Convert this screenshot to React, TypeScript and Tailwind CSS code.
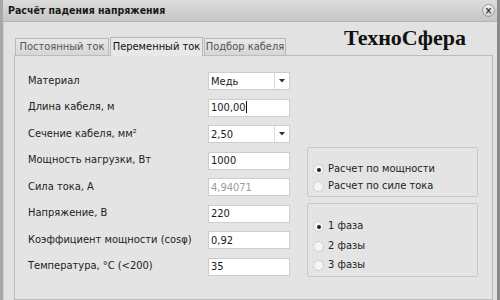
import React from "react";

const rows: { label: string; value: string; select?: boolean; disabled?: boolean; caret?: boolean }[] = [
  { label: "Материал", value: "Медь", select: true },
  { label: "Длина кабеля, м", value: "100,00", caret: true },
  { label: "Сечение кабеля, мм²", value: "2,50", select: true },
  { label: "Мощность нагрузки, Вт", value: "1000" },
  { label: "Сила тока, А", value: "4,94071", disabled: true },
  { label: "Напряжение, В", value: "220" },
  { label: "Коэффициент мощности (cosφ)", value: "0,92" },
  { label: "Температура, °С (<200)", value: "35" },
];

function Radio({ label, checked }: { label: string; checked?: boolean }) {
  return (
    <div className="flex items-center h-[17px] whitespace-nowrap">
      <span className="w-[11px] h-[11px] shrink-0 rounded-full border border-[#d0d0d0] bg-[#f4f4f4] flex items-center justify-center mr-[4px]">
        {checked && <span className="w-[4px] h-[4px] rounded-full bg-[#222]" />}
      </span>
      <span className="text-[11px] text-[#222]">{label}</span>
    </div>
  );
}

export default function App() {
  return (
    <div
      className="w-[500px] h-[300px] overflow-hidden flex bg-[#8a8a8a]"
      style={{ fontFamily: '"DejaVu Sans Condensed", "Liberation Sans", Arial, sans-serif' }}
    >
      <div className="w-[497px] h-full flex flex-col bg-[#e2e2e2] border-l-[3px] border-l-[#a8a8a8]">
        {/* title bar */}
        <div className="h-[22px] shrink-0 flex items-center justify-between pl-[5px] pr-[2px] bg-gradient-to-b from-[#dcdcdc] to-[#c6c6c6] border-b border-[#b4b4b4]">
          <span className="text-[10.5px] font-bold text-[#1a1a1a] whitespace-nowrap">Расчёт падения напряжения</span>
          <span className="w-[13px] h-[13px] rounded-full border border-[#9a9a9a] bg-gradient-to-b from-[#f4f4f4] to-[#cfcfcf] flex items-center justify-center text-[10px] font-bold leading-none text-[#333]">
            ×
          </span>
        </div>
        {/* body */}
        <div className="flex-1 flex flex-col pl-[10px] pr-[4px] border-l border-[#cfcfcf]">
          {/* tab strip */}
          <div className="h-[33px] shrink-0 flex items-end">
            <div className="flex items-end pl-[1px] shrink-0">
              <div className="h-[17px] w-[94px] shrink-0 whitespace-nowrap flex items-center justify-center text-[11px] text-[#555] border border-b-0 border-[#b9b9b9] bg-gradient-to-b from-[#e8e8e8] to-[#d6d6d6]">
                Постоянный ток
              </div>
              <div className="h-[19px] w-[93px] shrink-0 whitespace-nowrap ml-[1px] flex items-center justify-center text-[11px] text-[#111] border border-b-0 border-[#b9b9b9] bg-[#e8e8e8] relative top-[1px]">
                Переменный ток
              </div>
              <div className="h-[17px] w-[82px] shrink-0 whitespace-nowrap ml-[1px] flex items-center justify-center text-[11px] text-[#555] border border-b-0 border-[#b9b9b9] bg-gradient-to-b from-[#e8e8e8] to-[#d6d6d6]">
                Подбор кабеля
              </div>
            </div>
            <div
              className="ml-[58px] mb-[6px] text-[22px] font-bold text-[#111] leading-none whitespace-nowrap"
              style={{ fontFamily: '"Liberation Serif", "Times New Roman", serif' }}
            >
              ТехноСфера
            </div>
          </div>
          {/* panel */}
          <div className="flex-1 border border-[#bcbcbc] bg-[#e4e4e4] flex pl-[13px] pt-[16px]">
            <div className="flex flex-col gap-[8.5px] shrink-0">
              {rows.map((r) => (
                <div key={r.label} className="flex items-center h-[18px]">
                  <span className="w-[180px] shrink-0 whitespace-nowrap text-[11px] text-[#222]">{r.label}</span>
                  <div className="w-[82px] h-[18px] shrink-0 bg-white border border-[#cdcdcd] flex items-center">
                    <span
                      className={
                        "flex-1 pl-[2px] text-[11px] leading-none whitespace-nowrap " +
                        (r.disabled ? "text-[#9a9a9a]" : "text-[#1a1a1a]")
                      }
                    >
                      {r.value}
                      {r.caret && <span className="inline-block w-[1px] h-[12px] bg-[#111] align-middle -mt-[2px]" />}
                    </span>
                    {r.select && (
                      <span className="w-[15px] h-full border-l border-[#dcdcdc] flex items-center justify-center">
                        <svg width="6" height="4" viewBox="0 0 6 4">
                          <path d="M0 0 L6 0 L3 3.5 Z" fill="#333" />
                        </svg>
                      </span>
                    )}
                  </div>
                </div>
              ))}
            </div>
            <div className="ml-[17px] mt-[75px] flex flex-col gap-[6px] shrink-0">
              <div className="w-[171px] h-[50px] border border-[#c9c9c9] rounded-[2px] pl-[5px] pt-[13px]">
                <Radio label="Расчет по мощности" checked />
                <Radio label="Расчет по силе тока" />
              </div>
              <div className="w-[171px] h-[74px] border border-[#c9c9c9] rounded-[2px] pl-[5px] pt-[14px] flex flex-col gap-[2.5px]">
                <Radio label="1 фаза" checked />
                <Radio label="2 фазы" />
                <Radio label="3 фазы" />
              </div>
            </div>
          </div>
        </div>
      </div>
    </div>
  );
}
